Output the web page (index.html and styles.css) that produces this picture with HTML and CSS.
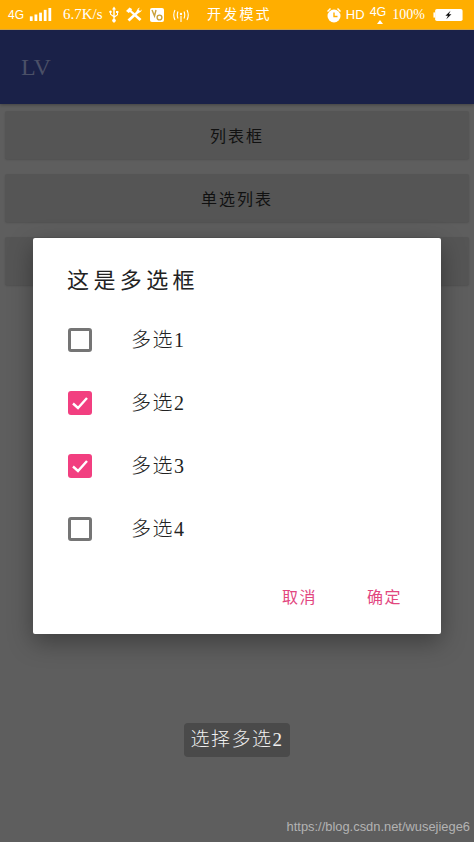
FILE: index.html
```html
<!DOCTYPE html>
<html lang="zh">
<head>
<meta charset="utf-8">
<title>LV</title>
<link rel="stylesheet" href="styles.css">
</head>
<body>
<div class="screen">
  <header class="status">
    <div class="status-left">
      <span class="s-4g">4G</span>
      <svg class="ic-signal" viewBox="0 0 24 14"><rect x="0" y="9" width="3" height="5"/><rect x="5" y="7" width="3" height="7"/><rect x="10" y="5" width="3" height="9"/><rect x="15" y="2" width="3" height="12"/><rect x="20" y="0" width="3" height="14"/></svg>
      <span class="s-speed">6.7K/s</span>
      <svg class="ic-usb" viewBox="0 0 10 16"><path d="M5 0 7 3H5.700V9.600L8 8V6.600H7V4.400H9.400V6.600H9V8.600L5.700 11V12.600A1.700 1.700 0 1 1 4.300 12.600V10.400L1 8V6.400A1.200 1.200 0 1 1 2 6.400V7.400L4.300 9V3H3Z"/></svg>
      <svg class="ic-tools" viewBox="0 0 18 15"><path d="M1 4 4.500 0.500 7 2 6.500 3.500 16.500 12 14.500 14 5 5 3.500 6 2.500 5Z"/><path d="M11 5 13 1.500 15 .5 13.500 2.500 15 4 17 2.500 16 4.500 13 6.500 4.500 14.500 2.500 12.500Z"/></svg>
      <svg class="ic-vo" viewBox="0 0 14 14"><rect width="14" height="14" rx="2" fill="#fff"/><path d="M2 2 4.500 8 6 2" fill="none" stroke="#c9a13a" stroke-width="1.400"/><circle cx="9.500" cy="9.500" r="2.400" fill="none" stroke="#c9a13a" stroke-width="1.400"/></svg>
      <svg class="ic-hotspot" viewBox="0 0 18 14"><circle cx="9" cy="6" r="1.200" fill="#fff"/><path d="M9 8v6M6 3.500Q4.500 7 6 10.500M12 3.500Q13.500 7 12 10.500M3 2Q.5 7 3 12M15 2Q17.500 7 15 12" fill="none" stroke="#fff" stroke-width="1.100"/></svg>
    </div>
    <span class="status-title">开发模式</span>
    <div class="status-right">
      <svg class="ic-alarm" viewBox="0 0 16 16"><path d="M1 4 4 1 5 2 2 5ZM11 2 12 1 15 4 14 5Z" fill="#fff"/><circle cx="8" cy="9" r="6.500" fill="#fff"/><path d="M8 5.500V9.500H11.500" fill="none" stroke="#ffae00" stroke-width="1.400"/></svg>
      <span class="s-hd">HD</span>
      <span class="s-4gb">4G<i class="s-arrows"></i></span>
      <span class="s-pct">100%</span>
      <svg class="ic-batt" viewBox="0 0 34 14"><rect x="0" y="4" width="2" height="6" fill="#fff"/><rect x="2" y="0" width="32" height="14" rx="2" fill="#fff"/><path d="M20 2 14 8H17L15 12 21 6H18Z" fill="#111"/></svg>
    </div>
  </header>
  <div class="appbar"><span class="appbar-title">LV</span></div>
  <main class="buttons">
    <div class="btn">列表框</div>
    <div class="btn">单选列表</div>
    <div class="btn"></div>
  </main>
  <section class="dialog">
    <h2 class="dialog-title">这是多选框</h2>
    <ul class="options">
      <li class="option"><span class="box"></span><span class="label">多选1</span></li>
      <li class="option"><span class="box on"><svg viewBox="0 0 24 24"><path d="M5 12.500 10 17 19 7" fill="none" stroke="#fff" stroke-width="2.400"/></svg></span><span class="label">多选2</span></li>
      <li class="option"><span class="box on"><svg viewBox="0 0 24 24"><path d="M5 12.500 10 17 19 7" fill="none" stroke="#fff" stroke-width="2.400"/></svg></span><span class="label">多选3</span></li>
      <li class="option"><span class="box"></span><span class="label">多选4</span></li>
    </ul>
    <div class="actions"><span class="action">取消</span><span class="action">确定</span></div>
  </section>
  <div class="toast">选择多选2</div>
  <div class="watermark">https://blog.csdn.net/wusejiege6</div>
</div>
</body>
</html>
```
FILE: styles.css
```css
* { box-sizing: border-box; }
html, body { margin: 0; padding: 0; }
body { width: 474px; height: 842px; overflow: hidden; font-family: "Liberation Serif", "Noto Sans CJK SC", serif; }
.screen { position: relative; width: 474px; height: 842px; background: #5e5e5e; display: flex; flex-direction: column; }

.status { height: 30px; background: #ffae00; color: #fff; display: flex; align-items: center; padding: 0 10px 0 8px; border-bottom: 1px solid #d8a640; position: relative; }
.status-left { display: flex; align-items: center; }
.status-right { display: flex; align-items: center; margin-left: auto; }
.status svg { display: block; fill: #fff; }
.s-4g { font: 12px "Liberation Sans", sans-serif; width: 21px; }
.ic-signal { width: 24px; height: 13px; margin-right: 10px; margin-top: -1px; }
.s-speed { font: 15px "Liberation Serif", serif; width: 46px; }
.ic-usb { width: 10px; height: 17px; margin-right: 6px; }
.ic-tools { width: 18px; height: 15px; margin-right: 7px; }
.ic-vo { width: 14px; height: 14px; margin-right: 8px; }
.ic-hotspot { width: 18px; height: 14px; }
.status-title { position: absolute; left: 207px; top: 4px; font: 14px/19px "Noto Sans CJK SC", sans-serif; letter-spacing: 2.200px; }
.ic-alarm { width: 16px; height: 16px; margin-right: 4px; }
.s-hd { font: 13px "Liberation Sans", sans-serif; margin-right: 5px; }
.s-4gb { font: 12.500px/12px "Liberation Sans", sans-serif; position: relative; margin-right: 6px; top: -3px; }
.s-arrows { position: absolute; left: 7px; top: 14px; width: 0; height: 0; border: 3px solid transparent; border-top: 0; border-bottom: 4px solid #fff; }
.s-pct { font: 14px "Liberation Serif", serif; margin-right: 7px; }
.ic-batt { width: 32px; height: 12px; }

.appbar { height: 74px; background: #1a2148; display: flex; align-items: center; padding-left: 21px; box-shadow: 0 1px 3px rgba(0,0,0,.3); }
.appbar-title { font: 24px "Liberation Serif", serif; color: #4b5067; }

.buttons { display: flex; flex-direction: column; gap: 15px; padding: 7px 5px 0; }
.btn { height: 48px; background: #555; border-radius: 2px; box-shadow: 0 1px 2px rgba(0,0,0,.15); display: flex; align-items: center; justify-content: center; font: 16px "Noto Sans CJK SC", sans-serif; color: #111; letter-spacing: 2px; }

.dialog { position: absolute; left: 33px; top: 238px; width: 408px; height: 396px; background: #fff; border-radius: 2px; box-shadow: 0 8px 24px rgba(0,0,0,.35); padding: 0 39px 0 35px; display: flex; flex-direction: column; }
.dialog-title { font: 400 22px/30px "Noto Sans CJK SC", sans-serif; color: #222; letter-spacing: 4.400px; margin: 25px 0 0 -1px; }
.options { list-style: none; margin: 15px 0 0; padding: 0; display: flex; flex-direction: column; }
.option { height: 63px; display: flex; align-items: center; }
.box { width: 24px; height: 24px; border: 3px solid #757575; border-radius: 3px; margin-right: 39px; display: block; }
.box.on { background: #f23f80; border: 0; }
.box svg { display: block; width: 24px; height: 24px; }
.label { font: 300 20px/28px "Liberation Serif", "Noto Sans CJK SC", serif; color: #222; letter-spacing: 1.500px; }
.actions { display: flex; justify-content: flex-end; gap: 50px; margin-top: 24px; }
.action { font: 16px/24px "Noto Sans CJK SC", sans-serif; color: #e2477f; letter-spacing: 1.500px; }

.toast { position: absolute; left: 184px; top: 723px; width: 106px; height: 34px; background: #4a4a4a; border-radius: 4px; color: #f0f0f0; font: 300 19px/34px "Liberation Serif", "Noto Sans CJK SC", serif; text-align: center; letter-spacing: 1.500px; white-space: nowrap; }
.watermark { position: absolute; right: 4px; top: 819px; font: 12.900px/16px "Liberation Sans", sans-serif; color: #b3b3b3; }
```
